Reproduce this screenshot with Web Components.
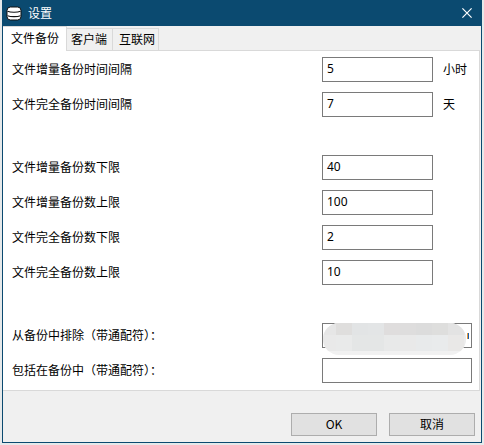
<!DOCTYPE html>
<html>
<head>
<meta charset="utf-8">
<style>
  html, body { margin: 0; background: #e6e9ea; }
  body { font: 12px "Noto Sans CJK SC", "Noto Sans", sans-serif; }
</style>
</head>
<body>
<settings-dialog title-text="设置">
  <form-row label="文件增量备份时间间隔" value="5" unit="小时"></form-row>
  <form-row label="文件完全备份时间间隔" value="7" unit="天" style="margin-top:10px"></form-row>
  <form-row label="文件增量备份数下限" value="40" style="margin-top:38px"></form-row>
  <form-row label="文件增量备份数上限" value="100" style="margin-top:10px"></form-row>
  <form-row label="文件完全备份数下限" value="2" style="margin-top:10px"></form-row>
  <form-row label="文件完全备份数上限" value="10" style="margin-top:10px"></form-row>
  <form-row label="从备份中排除（带通配符）：" long blurred style="margin-top:38px"></form-row>
  <form-row label="包括在备份中（带通配符）：" long style="margin-top:10px"></form-row>
</settings-dialog>

<script>
// mosaic that hides the path in the exclude field
const BLUR_TOP = ['#e6e6e6', '#dfdedd', '#e2e4e5', '#e3e5e6', '#dfdddd', '#dedddd', '#dcdcdc', '#dededd', '#e3e3e3', '#e8e8e8'];
const BLUR_BOTTOM = ['#e9e9e9', '#e9eaea', '#e4e6e6', '#e4e6e6', '#e8e9e9', '#e9e9e9', '#e8eaeb', '#e9ebec', '#e9e8e7', '#ececec'];

class FormRow extends HTMLElement {
  connectedCallback() {
    const label = this.getAttribute('label') || '';
    const value = this.getAttribute('value') || '';
    const unit = this.getAttribute('unit') || '';
    const width = this.hasAttribute('long') ? 150 : 111;
    const cells = BLUR_TOP.concat(BLUR_BOTTOM).map(c => `<i style="background:${c}"></i>`).join('');
    this.attachShadow({ mode: 'open' });
    this.shadowRoot.innerHTML = `
      <style>
        :host { display: flex; align-items: center; height: 25px; color: #000; }
        .label { width: 310px; flex: none; font-size: 12px; position: relative; top: -1px; }
        .box {
          position: relative;
          box-sizing: border-box;
          width: ${width}px;
          height: 25px;
          border: 1px solid #7a7a7a;
          background: #fff;
          padding: 0 4px;
          font: 12px/21px "Noto Sans", sans-serif;
        }
        .unit { margin-left: 10px; font-size: 12px; position: relative; top: -1px; }
        .blur {
          position: absolute;
          left: 0; top: -1px;
          width: 143px; height: 32px;
          border-radius: 16px;
          overflow: hidden;
          background: #f1f1f1;
          display: grid;
          grid-template-columns: 13px repeat(8, 16px) 2px;
          grid-template-rows: 12px 16px;
        }
        .clip {
          position: absolute;
          left: 144px; top: 9px;
          width: 2px; height: 6px;
          background: linear-gradient(90deg, #e39a3c 50%, #1c5fb0 50%);
        }
      </style>
      <span class="label">${label}</span>
      <div class="box">${value}${this.hasAttribute('blurred') ? `<div class="blur">${cells}</div><div class="clip"></div>` : ''}</div>
      ${unit ? `<span class="unit">${unit}</span>` : ''}
    `;
  }
}
customElements.define('form-row', FormRow);

class SettingsDialog extends HTMLElement {
  connectedCallback() {
    const title = this.getAttribute('title-text') || '';
    this.attachShadow({ mode: 'open' });
    this.shadowRoot.innerHTML = `
      <style>
        :host {
          display: flex;
          flex-direction: column;
          box-sizing: border-box;
          width: 480px;
          height: 443px;
          margin-left: 2px;
          border: 1px solid #0b4a70;
          border-top: 0;
          background: #f0f0f0;
        }
        .titlebar {
          display: flex;
          align-items: center;
          height: 26px;
          flex: none;
          background: #0b4a70;
          color: #fff;
          font-size: 12px;
          padding: 0 9px 0 3px;
        }
        .titlebar .db { width: 16px; height: 15px; margin-right: 6px; }
        .titlebar .name { flex: 1; position: relative; top: -1px; }
        .titlebar .close { width: 10px; height: 10px; }
        .tabs { display: flex; height: 24px; flex: none; align-items: flex-end; }
        .tab {
          box-sizing: border-box;
          height: 22px;
          line-height: 20px;
          font-size: 12px;
          border-top: 1px solid #d9d9d9;
          border-right: 1px solid #d9d9d9;
        }
        .tab.active {
          height: 25px;
          line-height: 21px;
          padding: 0 7px 0 8px;
          background: #fff;
          position: relative;
          z-index: 1;
          margin-bottom: -1px;
        }
        .tab.second { padding: 0 5px 0 4px; }
        .tab.third { padding: 0 3px 0 6px; }
        .panel {
          box-sizing: border-box;
          width: 477px;
          height: 341px;
          flex: none;
          background: #fff;
          border: solid #d9d9d9;
          border-width: 1px 1px 1px 0;
          padding: 6px 0 0 9px;
        }
        .footer {
          flex: 1;
          display: flex;
          justify-content: flex-end;
          align-items: flex-start;
          gap: 12px;
          padding: 22px 6px 0 0;
        }
        .btn {
          box-sizing: border-box;
          width: 86px;
          height: 23px;
          border: 1px solid #adadad;
          background: #e1e1e1;
          text-align: center;
          line-height: 20px;
          font-size: 12px;
        }
      </style>
      <div class="titlebar">
        <svg class="db" viewBox="0 0 16 15">
          <rect x="1" y="1" width="14" height="13" rx="3.5" fill="#fff" stroke="#111" stroke-width="1"/>
          <path d="M1.5 5.3c3 1.2 10 1.2 13 0M1.5 9.7c3 1.2 10 1.2 13 0" fill="none" stroke="#111" stroke-width="1.1"/>
        </svg>
        <span class="name">${title}</span>
        <svg class="close" viewBox="0 0 10 10"><path d="M.4.4l9.2 9.2M9.6.4L.4 9.6" stroke="#fff" stroke-width="1.2" fill="none"/></svg>
      </div>
      <div class="tabs">
        <div class="tab active">文件备份</div>
        <div class="tab second">客户端</div>
        <div class="tab third">互联网</div>
      </div>
      <div class="panel"><slot></slot></div>
      <div class="footer">
        <div class="btn">OK</div>
        <div class="btn">取消</div>
      </div>
    `;
  }
}
customElements.define('settings-dialog', SettingsDialog);
</script>
</body>
</html>
